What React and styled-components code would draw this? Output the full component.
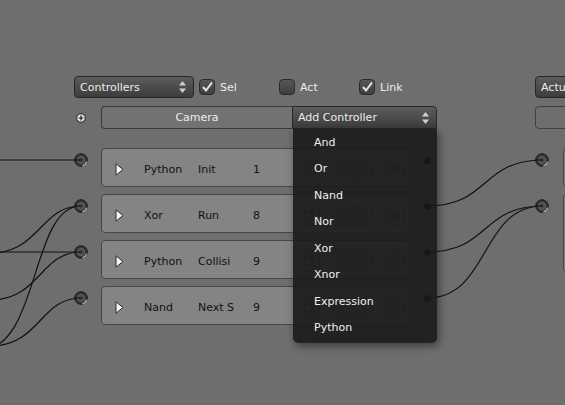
import React from 'react';
import styled, { createGlobalStyle } from 'styled-components';

const GlobalStyle = createGlobalStyle`
    html, body {
        margin: 0;
        padding: 0;
        background: #6e6e6e;
    }
`;

const controllers = [
    { id: 1, kind: 'Python', name: 'Init', state: '1', icon: 'script' },
    { id: 2, kind: 'Xor', name: 'Run', state: '8', icon: 'state' },
    { id: 3, kind: 'Python', name: 'Collisi', state: '9', icon: 'state' },
    { id: 4, kind: 'Nand', name: 'Next S', state: '9', icon: 'state' },
];

const menuItems = ['And', 'Or', 'Nand', 'Nor', 'Xor', 'Xnor', 'Expression', 'Python'];

const links = [
    'M -10 160 L 81 160',
    'M -10 252 L 81 252',
    'M -10 253 C 40 253, 40 206, 81 206',
    'M -10 300 C 40 300, 40 252, 81 252',
    'M -20 350 C 40 350, 30 206, 81 206',
    'M -10 346 C 40 346, 40 298, 81 298',
    'M 427 206 C 490 206, 480 160, 543 160',
    'M 427 252 C 490 252, 480 206, 543 206',
    'M 427 298 C 490 298, 480 206, 543 206',
];

function Socket() {
    return (
        <StSocket width="14" height="14" viewBox="0 0 14 14">
            <circle cx="7" cy="7" r="6.3" fill="#333" stroke="#1c1c1c" strokeWidth="1" />
            <path d="M 12.6 8.6 A 6 6 0 0 1 8.4 12.8" fill="none" stroke="#b8b8b8" strokeWidth="1.2" />
            <circle cx="7" cy="7" r="3.6" fill="#4a4a4a" stroke="#626262" strokeWidth="1" />
            <line x1="0" y1="7" x2="8" y2="7" stroke="#151515" strokeWidth="1.2" />
        </StSocket>
    );
}

function UpDown() {
    return (
        <svg width="9" height="16" viewBox="0 0 9 16">
            <path d="M1 6.5 L4.5 2 L8 6.5 Z" fill="#cfcfcf" />
            <path d="M1 9.5 L4.5 14 L8 9.5 Z" fill="#cfcfcf" />
        </svg>
    );
}

function Check({ checked, label }) {
    return (
        <StCheck>
            <StBox>
                {checked && (
                    <svg width="14" height="14" viewBox="0 0 14 14">
                        <path d="M3 7 L6 10.5 L12 2.5" fill="none" stroke="#e6e6e6" strokeWidth="2" />
                    </svg>
                )}
            </StBox>
            <span>{label}</span>
        </StCheck>
    );
}

function App() {
    return (
        <>
            <GlobalStyle />
            <StCanvas>
                <StLinks width="565" height="405">
                    {links.map((d, i) => (
                        <path key={i} d={d} fill="none" stroke="#111" strokeWidth="1.2" />
                    ))}
                </StLinks>

                <StColumns>
                    <StControllerColumn>
                        <StHeader>
                            <StDropdown $width={120}>
                                <span>Controllers</span>
                                <UpDown />
                            </StDropdown>
                            <StChecks>
                                <Check checked label="Sel" />
                                <Check label="Act" />
                                <Check checked label="Link" />
                            </StChecks>
                        </StHeader>

                        <StSubHeader>
                            <StAddIcon width="10" height="10" viewBox="0 0 10 10">
                                <circle cx="5" cy="5" r="4.3" fill="#e2e2e2" stroke="#1e1e1e" strokeWidth="1" />
                                <path d="M2.6 5 H7.4 M5 2.6 V7.4" stroke="#1e1e1e" strokeWidth="1.2" />
                            </StAddIcon>
                            <StNameBar>Camera</StNameBar>
                            <StAddWrap>
                                <StDropdown $width={145} $square>
                                    <span>Add Controller</span>
                                    <UpDown />
                                </StDropdown>
                                <StMenu>
                                    {menuItems.map((item) => (
                                        <StMenuItem key={item}>{item}</StMenuItem>
                                    ))}
                                </StMenu>
                            </StAddWrap>
                        </StSubHeader>

                        <StList>
                            {controllers.map((c) => (
                                <StItem key={c.id}>
                                    <Socket />
                                    <StRow>
                                        <StTriangle width="9" height="13" viewBox="0 0 9 13">
                                            <path d="M1 0.8 L8 6.5 L1 12.2 Z" fill="#f4f4f4" stroke="#2c2c2c" strokeWidth="1" />
                                        </StTriangle>
                                        <span>{c.kind}</span>
                                        <span>{c.name}</span>
                                        <span>{c.state}</span>
                                        <StSmallBtn>
                                            {c.icon === 'script' ? (
                                                <svg width="12" height="12" viewBox="0 0 12 12">
                                                    <rect x="1" y="2" width="10" height="8" fill="#b0a68a" stroke="#333" strokeWidth="0.8" />
                                                    <path d="M3 5 H9 M3 7.5 H7" stroke="#333" strokeWidth="0.8" />
                                                </svg>
                                            ) : (
                                                <svg width="12" height="12" viewBox="0 0 12 12">
                                                    <rect x="1" y="3" width="8" height="7" fill="#b08060" stroke="#333" strokeWidth="0.8" />
                                                    <rect x="7" y="2" width="3" height="9" fill="#c83c2c" />
                                                </svg>
                                            )}
                                        </StSmallBtn>
                                        <StArrowPair>
                                            <StArrowBtn>
                                                <svg width="10" height="6" viewBox="0 0 10 6">
                                                    <path d="M1 5.5 L5 1 L9 5.5" fill="none" stroke="#555" strokeWidth="1" />
                                                </svg>
                                            </StArrowBtn>
                                            <StArrowBtn>
                                                <svg width="10" height="6" viewBox="0 0 10 6">
                                                    <path d="M1 0.5 L5 5 L9 0.5" fill="none" stroke="#555" strokeWidth="1" />
                                                </svg>
                                            </StArrowBtn>
                                        </StArrowPair>
                                        <StSmallBtn>
                                            <svg width="10" height="10" viewBox="0 0 10 10">
                                                <path d="M1.5 1.5 L8.5 8.5 M8.5 1.5 L1.5 8.5" stroke="#555" strokeWidth="2" />
                                            </svg>
                                        </StSmallBtn>
                                    </StRow>
                                    <StDot />
                                </StItem>
                            ))}
                        </StList>
                    </StControllerColumn>

                    <StActuatorColumn>
                        <StHeader>
                            <StDropdown $width={120}>
                                <span>Actuators</span>
                                <UpDown />
                            </StDropdown>
                        </StHeader>
                        <StSubHeader>
                            <StEmptyBar />
                        </StSubHeader>
                        <StList>
                            <StItem>
                                <Socket />
                                <StActRow $height={39} />
                            </StItem>
                            <StItem>
                                <Socket />
                                <StActRow $height={79} />
                            </StItem>
                        </StList>
                    </StActuatorColumn>
                </StColumns>
            </StCanvas>
        </>
    );
}

export default App;

const StCanvas = styled.div`
    position: relative;
    width: 565px;
    height: 405px;
    overflow: hidden;
    background: #6e6e6e;
    font-family: 'DejaVu Sans', 'Liberation Sans', sans-serif;
    font-size: 11px;
`;

const StLinks = styled.svg`
    position: absolute;
    left: 0;
    top: 0;
    z-index: 0;
`;

const StColumns = styled.div`
    position: relative;
    z-index: 1;
    display: flex;
    padding: 76px 0 0 74px;
`;

const StControllerColumn = styled.div`
    width: 363px;
    flex-shrink: 0;
    display: flex;
    flex-direction: column;
`;

const StActuatorColumn = styled.div`
    margin-left: 98px;
    flex-shrink: 0;
    display: flex;
    flex-direction: column;
`;

const StHeader = styled.div`
    display: flex;
    align-items: center;
    height: 22px;
`;

const StDropdown = styled.div`
    box-sizing: border-box;
    width: ${(p) => p.$width}px;
    height: ${(p) => (p.$square ? 23 : 22)}px;
    flex-shrink: 0;
    display: flex;
    align-items: center;
    justify-content: space-between;
    padding: 0 6px 0 5px;
    border: 1px solid #262626;
    border-radius: ${(p) => (p.$square ? '0 4px 0 0' : '4px')};
    background: linear-gradient(#5c5c5c, #3c3c3c);
    color: #ececec;
    white-space: nowrap;
`;

const StChecks = styled.div`
    display: flex;
    align-items: center;
    margin-left: 5px;
`;

const StCheck = styled.div`
    width: 80px;
    display: flex;
    align-items: center;
    gap: 5px;
    color: #ececec;
`;

const StBox = styled.div`
    box-sizing: border-box;
    width: 16px;
    height: 16px;
    display: flex;
    align-items: center;
    justify-content: center;
    border: 1px solid #2a2a2a;
    border-radius: 4px;
    background: linear-gradient(#575757, #3e3e3e);
`;

const StSubHeader = styled.div`
    display: flex;
    align-items: center;
    height: 23px;
    margin-top: 8px;
`;

const StAddIcon = styled.svg`
    margin-left: 2px;
    margin-right: 15px;
    flex-shrink: 0;
`;

const StNameBar = styled.div`
    box-sizing: border-box;
    width: 191px;
    height: 23px;
    display: flex;
    align-items: center;
    justify-content: center;
    border: 1px solid #3a3a3a;
    border-right: none;
    border-radius: 4px 0 0 4px;
    background: #727272;
    color: #eeeeee;
`;

const StAddWrap = styled.div`
    position: relative;
`;

const StMenu = styled.div`
    position: absolute;
    top: 100%;
    left: 1px;
    z-index: 10;
    width: 144px;
    padding-bottom: 2px;
    border-radius: 0 0 5px 5px;
    background: rgba(26, 26, 26, 0.9);
    box-shadow: 2px 3px 8px rgba(0, 0, 0, 0.45);
`;

const StMenuItem = styled.div`
    height: 26.5px;
    display: flex;
    align-items: center;
    padding-left: 21px;
    color: #f0f0f0;
`;

const StList = styled.div`
    display: flex;
    flex-direction: column;
    gap: 7px;
    margin-top: 19px;
`;

const StItem = styled.div`
    display: flex;
    align-items: flex-start;
`;

const StSocket = styled.svg`
    flex-shrink: 0;
    margin-top: 5px;
`;

const StRow = styled.div`
    box-sizing: border-box;
    width: 309px;
    height: 39px;
    margin-left: 13px;
    padding: 3px 0 0 13px;
    display: grid;
    grid-template-columns: 29px 54px 55px 47px 32px 53px 20px;
    align-items: center;
    border: 1px solid #474747;
    border-radius: 4px;
    background: #848484;
    color: #111;
`;

const StTriangle = styled.svg`
    display: block;
`;

const StSmallBtn = styled.div`
    box-sizing: border-box;
    width: 20px;
    height: 21px;
    display: flex;
    align-items: center;
    justify-content: center;
    border: 1px solid #5e5e5e;
    border-radius: 4px;
    background: #7c7c7c;
`;

const StArrowPair = styled.div`
    display: flex;
    width: 41px;
    height: 21px;
    border: 1px solid #5e5e5e;
    border-radius: 4px;
    box-sizing: border-box;
    overflow: hidden;
`;

const StArrowBtn = styled.div`
    flex: 1;
    display: flex;
    align-items: center;
    justify-content: center;
    background: #7c7c7c;
    & + & {
        border-left: 1px solid #5e5e5e;
    }
`;

const StDot = styled.div`
    width: 7px;
    height: 7px;
    margin: 9px 0 0 14px;
    border-radius: 50%;
    background: #050505;
`;

const StEmptyBar = styled.div`
    box-sizing: border-box;
    width: 120px;
    height: 23px;
    border: 1px solid #404040;
    border-radius: 4px;
    background: #6e6e6e;
`;

const StActRow = styled.div`
    box-sizing: border-box;
    width: 120px;
    height: ${(p) => p.$height}px;
    margin-left: 14px;
    border: 1px solid #474747;
    border-radius: 4px;
    background: #848484;
`;
